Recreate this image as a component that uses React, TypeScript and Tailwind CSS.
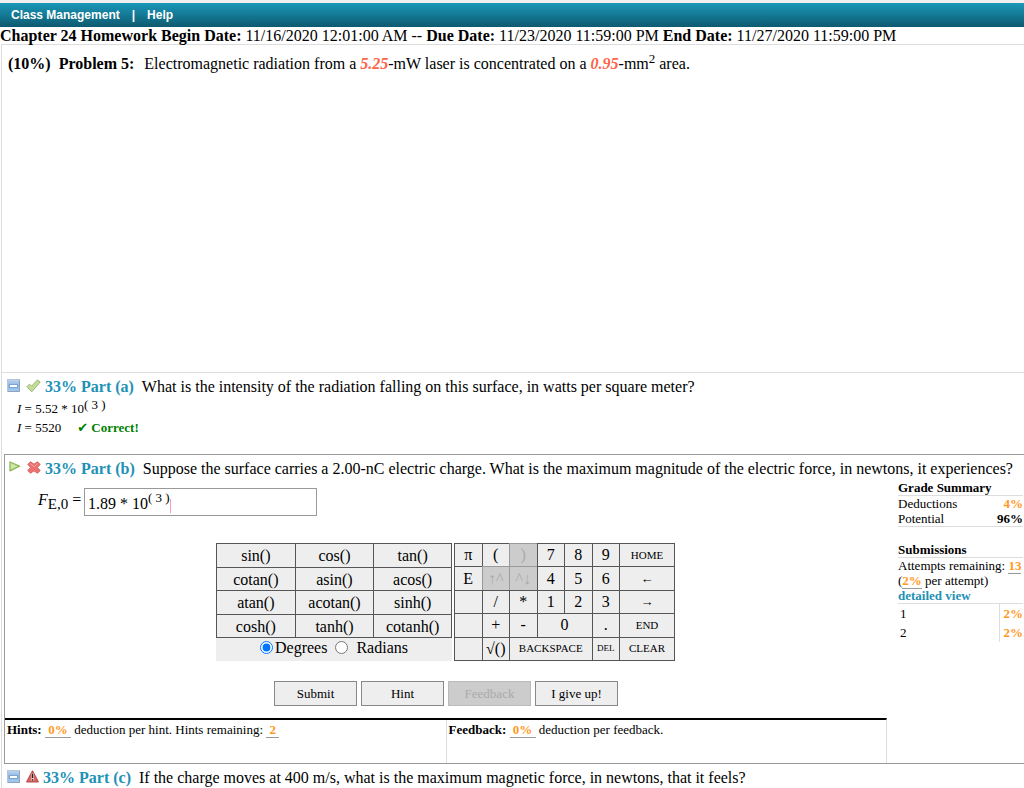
import { useState } from "react";
import type { ReactNode } from "react";

const trigKeys = [
  "sin()", "cos()", "tan()",
  "cotan()", "asin()", "acos()",
  "atan()", "acotan()", "sinh()",
  "cosh()", "tanh()", "cotanh()",
];

type Key = {
  label: string;
  className?: string;
  disabled?: boolean;
};

const numberKeys: Key[] = [
  { label: "π" },
  { label: "(" },
  { label: ")", disabled: true },
  { label: "7" },
  { label: "8" },
  { label: "9" },
  { label: "HOME", className: "col-span-2 text-[11px]" },
  { label: "E" },
  { label: "↑^", disabled: true },
  { label: "^↓", disabled: true },
  { label: "4" },
  { label: "5" },
  { label: "6" },
  { label: "←", className: "col-span-2 text-[13px]" },
  { label: "" },
  { label: "/" },
  { label: "*" },
  { label: "1" },
  { label: "2" },
  { label: "3" },
  { label: "→", className: "col-span-2 text-[13px]" },
  { label: "" },
  { label: "+" },
  { label: "-" },
  { label: "0", className: "col-span-2" },
  { label: "." },
  { label: "END", className: "col-span-2 text-[11px]" },
  { label: "" },
  { label: "√()" },
  { label: "BACKSPACE", className: "col-span-3 text-[11px]" },
  { label: "DEL", className: "text-[9px]" },
  { label: "CLEAR", className: "col-span-2 text-[11px]" },
];

function CollapseIcon() {
  return (
    <svg width="13" height="13" viewBox="0 0 13 13" className="shrink-0">
      <defs>
        <linearGradient id="collapse" x1="0" y1="0" x2="0" y2="1">
          <stop offset="0" stopColor="#bfd6ee" />
          <stop offset="0.5" stopColor="#8fb6e0" />
          <stop offset="1" stopColor="#a6cbee" />
        </linearGradient>
      </defs>
      <rect x="0.5" y="0.5" width="12" height="12" fill="url(#collapse)" stroke="#b4c6dc" />
      <path d="M1 12.5h11.5V1" fill="none" stroke="#8ea3c0" />
      <rect x="2.5" y="5.5" width="8" height="3" fill="#fff" stroke="#7ba3d3" />
    </svg>
  );
}

function ExpandIcon() {
  return (
    <svg width="12" height="11" viewBox="0 0 12 11" className="shrink-0">
      <path d="M1 1 L10.5 5.2 L1 9.8 Z" fill="#cde7a4" stroke="#8fb45c" strokeWidth="1.3" strokeLinejoin="round" />
    </svg>
  );
}

function CheckIcon() {
  return (
    <svg width="15" height="14" viewBox="0 0 15 14" className="shrink-0">
      <path
        d="M0.8 7.6 L3.6 5.2 L5.6 7.2 L11.4 0.9 L14.2 3 L5.8 12.8 Z"
        fill="#c3de96"
        stroke="#9cb577"
        strokeLinejoin="round"
      />
    </svg>
  );
}

function CrossIcon() {
  return (
    <svg width="14" height="13" viewBox="0 0 14 13" className="shrink-0">
      <path
        d="M3.6 0.8 L7 3.2 L10.4 0.8 L13.2 3.4 L10.4 6.5 L13.2 9.6 L10.4 12.2 L7 9.8 L3.6 12.2 L0.8 9.6 L3.6 6.5 L0.8 3.4 Z"
        fill="#ef6f6f"
        stroke="#cf6464"
        strokeLinejoin="round"
      />
      <path d="M3.4 2.8 L7 5.6 L10.6 2.8" fill="none" stroke="#f7a5a5" />
    </svg>
  );
}

function WarningIcon() {
  return (
    <svg width="13" height="13" viewBox="0 0 13 13" className="shrink-0">
      <path d="M6.5 1 L12.2 11.8 H0.8 Z" fill="#e26666" stroke="#c05353" strokeWidth="1.4" strokeLinejoin="round" />
      <path d="M6.5 3.4 V11" stroke="#f3c4c4" strokeWidth="2.6" />
      <path d="M6.5 3.8 V8 M6.5 9.2 V10.8" stroke="#222" strokeWidth="1.4" />
    </svg>
  );
}

function PartTitle({ icons, part, children }: { icons: ReactNode; part: string; children: ReactNode }) {
  return (
    <div className="flex items-start">
      <span className="flex gap-1.5 pt-1.5 mr-1">{icons}</span>
      <h2 className="leading-6 whitespace-nowrap pt-0.5">
        <b className="text-[#2191b5] mr-2">33% {part}</b>
        {children}
      </h2>
    </div>
  );
}

function Percent({ children }: { children: ReactNode }) {
  return <b className="text-[#ff9a1f] border-b border-[#999]">{children}</b>;
}

function Keypad() {
  const [unit, setUnit] = useState("degrees");

  return (
    <div className="flex gap-0.5">
      <div className="w-[236px] h-[118px] grid grid-cols-3 grid-rows-5 bg-[#eee]">
        {trigKeys.map((key) => (
          <button key={key} type="button" className="border-t border-l border-[#555] nth-[3n]:border-r">
            {key}
          </button>
        ))}
        <div className="col-span-3 border-t border-[#555] flex items-center justify-center pb-1">
          <input
            type="radio"
            id="degrees"
            name="unit"
            checked={unit === "degrees"}
            onChange={() => setUnit("degrees")}
            className="size-[13px] mr-0.5"
          />
          <label htmlFor="degrees" className="mr-2">Degrees</label>
          <input
            type="radio"
            id="radians"
            name="unit"
            checked={unit === "radians"}
            onChange={() => setUnit("radians")}
            className="size-[13px] mr-2"
          />
          <label htmlFor="radians">Radians</label>
        </div>
      </div>
      <div className="w-[221px] h-[118px] grid grid-cols-8 grid-rows-5 bg-[#eee] border-r border-b border-[#555] leading-none">
        {numberKeys.map((key, i) => (
          <button
            key={i}
            type="button"
            disabled={key.disabled}
            className={`border-t border-l border-[#555] whitespace-nowrap disabled:bg-[#ccc] disabled:text-[#aaa] disabled:border-[#999] ${key.className ?? ""}`}
          >
            {key.label}
          </button>
        ))}
      </div>
    </div>
  );
}

function GradeSummary() {
  return (
    <aside className="w-[125px] shrink-0 text-[13px] leading-[15px] mr-px">
      <h3 className="font-bold border-b border-[#ddd]">Grade Summary</h3>
      <table className="w-full border-b border-[#ddd]">
        <tbody>
          <tr>
            <td>Deductions</td>
            <td className="text-right font-bold text-[#ff9a1f]">4%</td>
          </tr>
          <tr>
            <td>Potential</td>
            <td className="text-right font-bold">96%</td>
          </tr>
        </tbody>
      </table>
      <h3 className="font-bold border-b border-[#ddd] mt-[15px]">Submissions</h3>
      <p className="whitespace-nowrap">Attempts remaining: <Percent>13</Percent></p>
      <p>(<Percent>2%</Percent> per attempt)</p>
      <a href="#" className="block font-bold text-[#2191b5]">detailed view</a>
      <table className="w-full border-t border-[#ddd]">
        <tbody>
          {[1, 2].map((n) => (
            <tr key={n} className="h-[19px]">
              <td className="pl-0.5">{n}</td>
              <td className="w-6 border-l border-[#ddd] text-right font-bold text-[#ff9a1f]">2%</td>
            </tr>
          ))}
        </tbody>
      </table>
    </aside>
  );
}

export default function App() {
  const [base, setBase] = useState("1.89 * 10");
  const [exponent, setExponent] = useState("( 3 )");

  const buttonStyle =
    "w-[83px] h-[25px] bg-[#eee] border border-[#888] text-[13px] disabled:bg-[#ccc] disabled:text-[#aaa] disabled:border-[#bbb]";

  return (
    <div className="min-h-screen overflow-hidden bg-white text-black text-base font-['Liberation_Serif',serif]">
      <nav className="h-[27px] border-t-3 border-[#f0f0f0] bg-linear-to-b from-[#1b98ba] to-[#0e5a70] text-white text-xs font-bold font-['Liberation_Sans',sans-serif] flex items-center gap-3 pl-[11px]">
        <a href="#">Class Management</a>
        <span>|</span>
        <a href="#">Help</a>
      </nav>
      <p className="leading-[17px] whitespace-nowrap">
        <b>Chapter 24 Homework Begin Date:</b> 11/16/2020 12:01:00 AM -- <b>Due Date:</b> 11/23/2020 11:59:00 PM{" "}
        <b>End Date:</b> 11/27/2020 11:59:00 PM
      </p>

      <main className="ml-px border-l border-t border-[#ddd]">
        <section className="h-[328px] border-b border-[#ddd] pl-1.5 pt-[7px]">
          <p className="leading-6">
            <b className="mr-2.5">(10%)&nbsp; Problem 5:</b>
            Electromagnetic radiation from a <b className="italic text-[#ff6347]">5.25</b>-mW laser is concentrated on
            a <b className="italic text-[#ff6347]">0.95</b>-mm<sup className="text-[13px]">2</sup> area.
          </p>
        </section>

        <section className="h-[81px] pl-[5px]">
          <PartTitle icons={<><CollapseIcon /><CheckIcon /></>} part="Part (a)">
            What is the intensity of the radiation falling on this surface, in watts per square meter?
          </PartTitle>
          <div className="pl-2.5 text-[13px] leading-[19px]">
            <p><i>I</i> = 5.52 * 10<sup className="text-[13px] -top-1">( 3 )</sup></p>
            <p>
              <i>I</i> = 5520
              <b className="ml-4 text-[#008000]"><span className="font-['DejaVu_Sans']">✔</span> Correct!</b>
            </p>
          </div>
        </section>

        <section className="ml-0.5 border-l border-y border-[#999]">
          <div className="h-[25px] pl-1">
            <PartTitle icons={<><ExpandIcon /><CrossIcon /></>} part="Part (b)">
              Suppose the surface carries a 2.00-nC electric charge. What is the maximum magnitude of the electric
              force, in newtons, it experiences?
            </PartTitle>
          </div>
          <div className="flex justify-between">
            <div className="w-[882px]">
              <div className="flex pt-2 pl-[33px]">
                <label htmlFor="answer" className="w-[46px] leading-6 whitespace-nowrap">
                  <i>F</i><sub className="text-[15px]">E,0</sub> =
                </label>
                <div className="w-[233px] h-7 border border-[#999] flex items-center pl-[3px]">
                  <input
                    id="answer"
                    value={base}
                    onChange={(e) => setBase(e.target.value)}
                    className="w-[60px] pt-1 outline-none"
                  />
                  <input
                    aria-label="Exponent"
                    value={exponent}
                    onChange={(e) => setExponent(e.target.value)}
                    className="w-[22px] pb-2 text-[13px] outline-none"
                  />
                  <span className="w-px h-3.5 mt-2 bg-[#f9b]" />
                </div>
              </div>
              <div className="pt-[27px] pl-[211px]">
                <Keypad />
              </div>
              <div className="flex justify-center gap-1 pt-5 pb-3">
                <button type="button" className={buttonStyle}>Submit</button>
                <button type="button" className={buttonStyle}>Hint</button>
                <button type="button" disabled className={buttonStyle}>Feedback</button>
                <button type="button" className={buttonStyle}>I give up!</button>
              </div>
              <div className="h-[45px] grid grid-cols-2 border-t-2 border-r border-t-black border-r-[#ddd] text-[13px] leading-5">
                <p className="pl-0.5"><b>Hints:</b> <Percent>&nbsp;0%&nbsp;</Percent> deduction per hint. Hints remaining: <Percent>&nbsp;2&nbsp;</Percent></p>
                <p className="pl-0.5 border-l border-[#ddd]"><b>Feedback:</b> <Percent>&nbsp;0%&nbsp;</Percent> deduction per feedback.</p>
              </div>
            </div>
            <GradeSummary />
          </div>
        </section>

        <section className="pl-[5px]">
          <PartTitle icons={<><CollapseIcon /><WarningIcon /></>} part="Part (c)">
            If the charge moves at 400 m/s, what is the maximum magnetic force, in newtons, that it feels?
          </PartTitle>
        </section>
      </main>
    </div>
  );
}
